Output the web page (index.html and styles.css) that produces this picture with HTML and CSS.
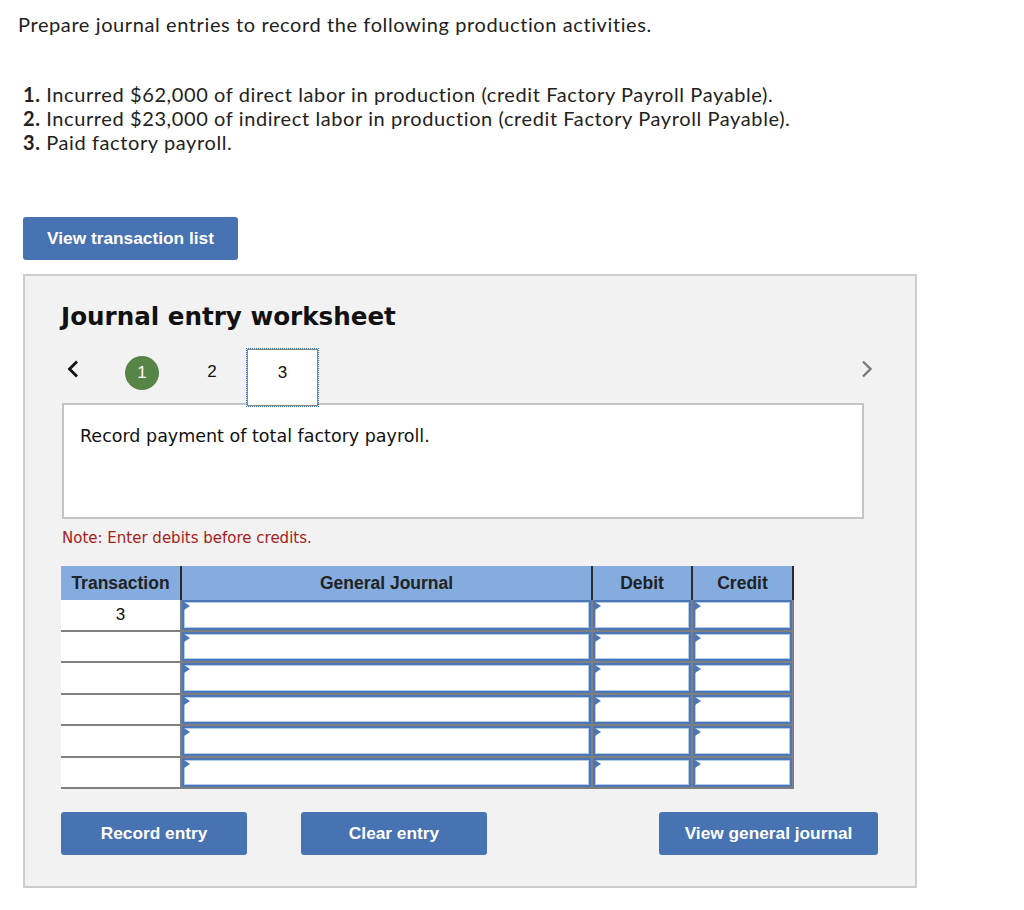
FILE: index.html
```html
<!DOCTYPE html>
<html>
<head>
<meta charset="utf-8">
<link rel="stylesheet" href="styles.css">
</head>
<body>
<div class="page">
  <p class="intro">Prepare journal entries to record the following production activities.</p>
  <ol class="tasks">
    <li><b>1.</b> Incurred $62,000 of direct labor in production (credit Factory Payroll Payable).</li>
    <li><b>2.</b> Incurred $23,000 of indirect labor in production (credit Factory Payroll Payable).</li>
    <li><b>3.</b> Paid factory payroll.</li>
  </ol>
  <button class="btn btn-list">View transaction list</button>

  <div class="panel">
    <h2 class="panel-title">Journal entry worksheet</h2>
    <div class="nav">
      <span class="nav-prev"><svg width="16" height="20" viewBox="0 0 16 20"><path d="M12 2.5 L4.5 10 L12 17.5" fill="none" stroke="#111" stroke-width="2.8"/></svg></span>
      <span class="step"><span class="done">1</span></span>
      <span class="step">2</span>
      <span class="step current">3</span>
      <span class="nav-next"><svg width="14" height="20" viewBox="0 0 14 20"><path d="M3 2.5 L10.5 10 L3 17.5" fill="none" stroke="#7a7a7a" stroke-width="2.4"/></svg></span>
    </div>
    <div class="prompt">Record payment of total factory payroll.</div>
    <p class="note">Note: Enter debits before credits.</p>

    <div class="journal">
      <div class="jrow head">
        <div class="hcell">Transaction</div>
        <div class="hcell">General Journal</div>
        <div class="hcell">Debit</div>
        <div class="hcell">Credit</div>
      </div>
      <div class="jrow tall">
        <div class="tcell">3</div>
        <div class="icell"><div class="inp"></div></div>
        <div class="icell"><div class="inp"></div></div>
        <div class="icell"><div class="inp"></div></div>
      </div>
      <div class="jrow">
        <div class="tcell"></div>
        <div class="icell"><div class="inp"></div></div>
        <div class="icell"><div class="inp"></div></div>
        <div class="icell"><div class="inp"></div></div>
      </div>
      <div class="jrow tall">
        <div class="tcell"></div>
        <div class="icell"><div class="inp"></div></div>
        <div class="icell"><div class="inp"></div></div>
        <div class="icell"><div class="inp"></div></div>
      </div>
      <div class="jrow">
        <div class="tcell"></div>
        <div class="icell"><div class="inp"></div></div>
        <div class="icell"><div class="inp"></div></div>
        <div class="icell"><div class="inp"></div></div>
      </div>
      <div class="jrow tall">
        <div class="tcell"></div>
        <div class="icell"><div class="inp"></div></div>
        <div class="icell"><div class="inp"></div></div>
        <div class="icell"><div class="inp"></div></div>
      </div>
      <div class="jrow">
        <div class="tcell"></div>
        <div class="icell"><div class="inp"></div></div>
        <div class="icell"><div class="inp"></div></div>
        <div class="icell"><div class="inp"></div></div>
      </div>
    </div>

    <div class="actions">
      <button class="btn btn-record">Record entry</button>
      <button class="btn btn-clear">Clear entry</button>
      <button class="btn btn-view">View general journal</button>
    </div>
  </div>
</div>
</body>
</html>
```

FILE: styles.css
```css
* { box-sizing: border-box; }
body { margin: 0; background: #fff; color: #222; }
.page { padding: 12px 0 0 23px; width: 940px; }

.intro {
  margin: 0 0 0 -5px;
  font-family: "Lato", sans-serif;
  font-size: 20px;
  letter-spacing: 0.6px;
  line-height: 24px;
  color: #222;
}
.tasks {
  list-style: none;
  margin: 46px 0 0 0;
  padding: 0;
  font-family: "Lato", sans-serif;
  font-size: 20px;
  letter-spacing: 0.6px;
  line-height: 24px;
  color: #222;
}
.tasks b { font-weight: 700; }

.btn {
  display: inline-flex;
  align-items: center;
  justify-content: center;
  height: 43px;
  border: none;
  border-radius: 3px;
  background: #4773b3;
  color: #fff;
  font-family: "Liberation Sans", Arial, sans-serif;
  font-weight: 700;
  font-size: 17.3px;
  padding: 0;
}
.btn-list { width: 215px; margin-top: 63px; display: flex; }

.panel {
  margin-top: 14px;
  width: 894px;
  height: 614px;
  background: #f2f2f2;
  border: 2px solid #cccccc;
  padding: 26px 35px 0 36px;
}
.panel-title {
  margin: 0;
  font-family: "DejaVu Sans", Verdana, sans-serif;
  font-weight: 700;
  font-size: 24.6px;
  line-height: 30px;
  color: #111;
}

.nav {
  display: flex;
  align-items: flex-start;
  height: 54px;
  margin-top: 17px;
  font-family: "Liberation Sans", Arial, sans-serif;
  font-size: 17px;
  color: #111;
}
.nav-prev { width: 46px; height: 46px; display: flex; align-items: center; padding-left: 4px; margin-top: -3px; }
.nav-next { margin-left: auto; margin-right: 6px; height: 46px; display: flex; align-items: center; margin-top: -3px; }
.step {
  width: 70px;
  height: 46px;
  display: flex;
  align-items: center;
  justify-content: center;
}
.done {
  width: 34px;
  height: 34px;
  border-radius: 50%;
  background: #578447;
  color: #fff;
  display: flex;
  align-items: center;
  justify-content: center;
  font-size: 17px;
  margin-top: 2px;
}
.step.current {
  width: 71px;
  height: 57px;
  align-items: flex-start;
  padding-top: 13px;
  background: #fff;
  border: 1px solid #888;
  outline: 1px dotted #2f6fc4;
  position: relative;
  z-index: 2;
  margin-bottom: -3px;
}

.prompt {
  width: 802px;
  height: 116px;
  background: #fff;
  border: 2px solid #c4c4c4;
  padding: 20px 0 0 16px;
  font-family: "DejaVu Sans", Verdana, sans-serif;
  font-size: 17.5px;
  line-height: 22px;
  color: #111;
  margin-left: 1px;
}
.note {
  margin: 10px 0 0 1px;
  font-family: "DejaVu Sans", Verdana, sans-serif;
  font-size: 15px;
  line-height: 18px;
  color: #a51d1d;
}

.journal { margin-top: 19px; width: 733px; }
.jrow {
  display: grid;
  grid-template-columns: 121px 411px 100px 101px;
  height: 31px;
}
.jrow.tall { height: 32px; }
.jrow.head { height: 34px; background: #84acdf; }
.hcell {
  display: flex;
  align-items: center;
  justify-content: center;
  font-family: "Liberation Sans", Arial, sans-serif;
  font-weight: 700;
  font-size: 17.5px;
  color: #222;
  border-right: 2px solid #2b2b2b;
}
.tcell {
  background: #fff;
  border-right: 2px solid #7f7f7f;
  border-bottom: 2px solid #7f7f7f;
  display: flex;
  align-items: center;
  justify-content: center;
  font-family: "Liberation Sans", Arial, sans-serif;
  font-size: 17px;
  color: #111;
}
.icell {
  background: #7f7f7f;
  padding: 0 2px 2px 0;
}
.inp {
  height: 100%;
  background: #fff;
  border: 2px solid #4b77b8;
  box-shadow: inset 0 0 0 1px #b3cbeb;
  position: relative;
}
.inp::before {
  content: "";
  position: absolute;
  left: 0;
  top: 0;
  border-left: 6px solid #4b77b8;
  border-top: 4px solid transparent;
  border-bottom: 4px solid transparent;
}

.actions {
  display: flex;
  margin-top: 23px;
}
.btn-record { width: 186px; }
.btn-clear { width: 186px; margin-left: 54px; }
.btn-view { width: 219px; margin-left: 172px; }
```
